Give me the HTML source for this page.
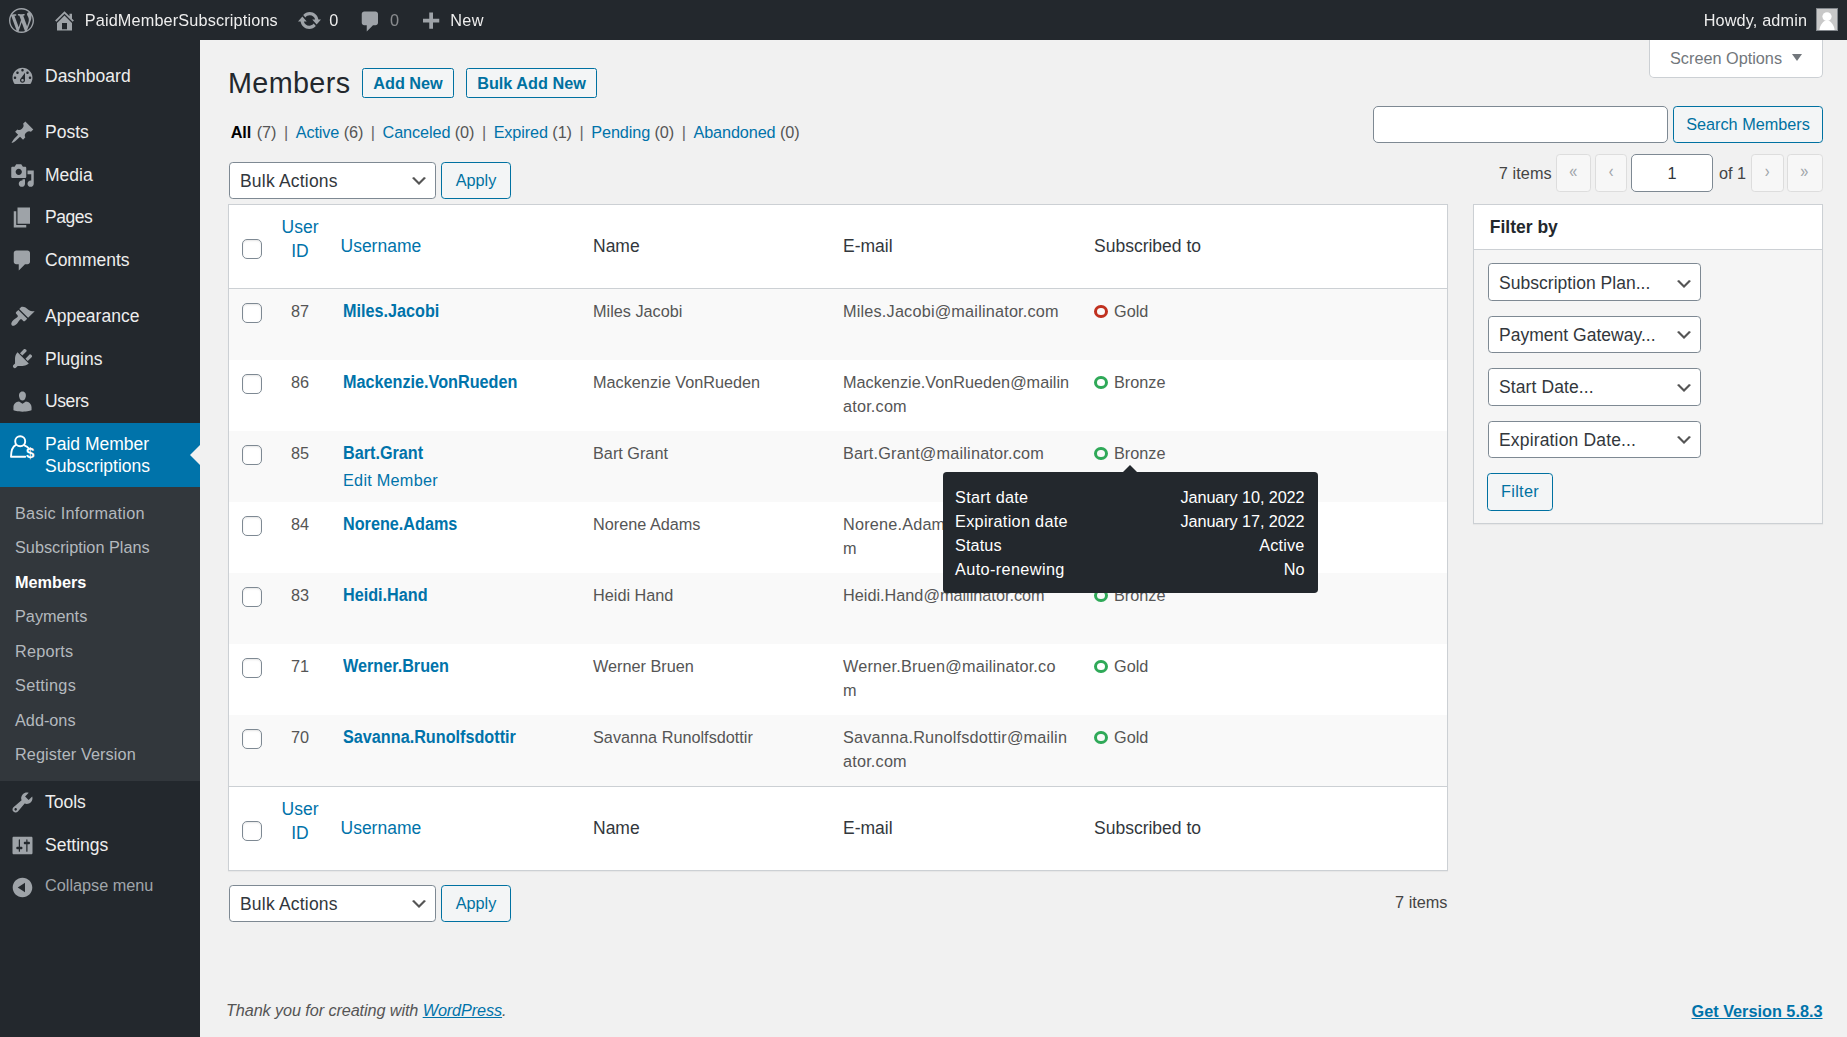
<!DOCTYPE html>
<html lang="en">
<head>
<meta charset="utf-8">
<title>Members ‹ PaidMemberSubscriptions — WordPress</title>
<style>
html,body{margin:0;padding:0}
body{width:1847px;height:1037px;overflow:hidden;position:relative;background:#f1f1f1;color:#444;font-family:"Liberation Sans",sans-serif;font-size:16.25px;line-height:1.4}
a{color:#0073aa;text-decoration:none}
svg{display:block}
.abs{position:absolute}
/* ---------- admin bar ---------- */
#wpadminbar{will-change:transform;position:absolute;left:0;top:0;width:1847px;height:40px;background:#23282d;color:#eee;font-size:16.25px;line-height:40px;z-index:10}
#wpadminbar .ic{position:absolute;width:25px;height:25px;fill:#9ea3a8}
#wpadminbar .t{position:absolute;top:0;white-space:nowrap;color:#eee}
/* ---------- side menu ---------- */
#adminmenuback{position:absolute;left:0;top:40px;width:200px;height:997px;background:#23282d}
#adminmenu{position:absolute;left:0;top:55px;width:200px;font-size:17.5px;line-height:22px;color:#eee}
#adminmenu .mi{position:relative;height:42.5px}
#adminmenu .mi svg{position:absolute;left:10px;top:8.75px;width:25px;height:25px;fill:#9ea3a8}
#adminmenu .mi .n{position:absolute;left:45px;top:10px;white-space:nowrap}
#adminmenu .sep{height:13.75px}
#adminmenu .cur{background:#0073aa;height:64px;color:#fff}
#adminmenu .cur svg{fill:#fff}
#adminmenu .cur:after{content:"";position:absolute;right:0;top:22px;border:10px solid transparent;border-right-color:#f1f1f1;width:0;height:0}
#adminmenu .sub{background:#32373c;padding:8.75px 0 10px;font-size:16.25px;line-height:22px;color:#b4b9be}
#adminmenu .sub div{height:34.5px;box-sizing:border-box;padding:6.25px 15px}
#adminmenu .sub .on{color:#fff;font-weight:bold}
#adminmenu .col{color:#a0a5aa;font-size:16.25px}
#adminmenu .col .n{top:8px}


/* ---------- content ---------- */
#wpbody{position:absolute;left:200px;top:40px;width:1647px;height:997px;color:#444}
.btn{position:absolute;box-sizing:border-box;border:1px solid #0071a1;border-radius:3.75px;background:#f3f5f6;color:#0071a1;font-size:16.25px;text-align:center;white-space:nowrap;height:36.5px;line-height:34.5px}
.pta{position:absolute;box-sizing:border-box;border:1px solid #0071a1;border-radius:2.5px;background:#f3f5f6;color:#0071a1;font-size:16.25px;font-weight:bold;text-align:center;white-space:nowrap;height:30px;line-height:28px}
.sel{position:absolute;box-sizing:border-box;border:1px solid #7e8993;border-radius:3.75px;background:#fff;color:#32373c;font-size:17.5px;height:37px;line-height:37.5px;padding-left:10px;white-space:nowrap}
.sel svg{position:absolute;right:6px;top:8.5px;width:20px;height:20px}
.inp{position:absolute;box-sizing:border-box;border:1px solid #7e8993;border-radius:5px;background:#fff;color:#32373c;height:36.5px}
.pg{position:absolute;box-sizing:border-box;border:1px solid #ddd;border-radius:3.75px;background:#f7f7f7;color:#a0a5aa;font-size:19px;line-height:32px;height:38px;text-align:center;top:114px}
.pg i{display:inline-block;font-style:normal;transform:scaleX(.76)}
#scr{position:absolute;left:1449px;top:0;width:173.5px;height:37.5px;box-sizing:border-box;border:1px solid #ccd0d4;border-top:none;border-radius:0 0 5px 5px;background:#fff;color:#72777c;font-size:16.25px;line-height:37px}
h1{position:absolute;margin:0;left:28px;top:25px;font-size:28.75px;font-weight:normal;color:#23282d;line-height:37px;white-space:nowrap;letter-spacing:.37px}
.subsubsub{position:absolute;left:27.5px;top:80px;margin:0;color:#666;font-size:16.25px;line-height:24px;white-space:nowrap;letter-spacing:-.115px}
.subsubsub a,.subsubsub b{padding:0 3.25px}
.subsubsub b{color:#000}
.subsubsub b i{font-weight:normal;margin-left:1.2px}
.subsubsub i{font-style:normal;color:#555}
/* table */
#tbl{position:absolute;left:28px;top:164px;width:1219.5px;height:666.5px;box-sizing:border-box;border:1px solid #ccd0d4;background:#fff;box-shadow:0 1px 1px rgba(0,0,0,.04)}
#tbl .hd{position:absolute;left:0;width:1217.5px;height:83px;font-size:17.5px;line-height:24px;color:#32373c}
#tbl .hd.top{top:0;border-bottom:1px solid #ccd0d4}
#tbl .hd.bot{top:581px;border-top:1px solid #ccd0d4}
#tbl .row{position:absolute;left:0;width:1217.5px;height:71px;font-size:16.25px;line-height:24px;color:#555}
#tbl .row.odd{background:#f9f9f9}
.cb{position:absolute;left:13px;box-sizing:border-box;width:20px;height:20px;border:1px solid #7e8993;border-radius:5px;background:#fff;box-shadow:inset 0 1px 2px rgba(0,0,0,.1)}
.c{position:absolute;white-space:nowrap}
.cid{left:39.5px;width:63px;text-align:center}
.cun{left:114px}
.cnm{left:364px}
.cem{left:614px}
.csb{left:865px}
.row .c{top:10px}
.row .cun{font-size:17.5px;font-weight:bold;color:#0073aa;transform:scaleX(.926);transform-origin:0 50%}
.ra{position:absolute;left:114px;top:36.5px;color:#0073aa;letter-spacing:.25px}
.dot{display:inline-block;box-sizing:border-box;width:14px;height:13.5px;border:3px solid #2fa958;border-radius:50%;vertical-align:-1px;margin-right:6px}
.dot.red{border-color:#c0311f}
.k{letter-spacing:.19px}
/* filter */
#flt{position:absolute;left:1273px;top:164px;width:350px;height:319.5px;box-sizing:border-box;border:1px solid #ccd0d4;background:#f5f5f5;box-shadow:0 1px 1px rgba(0,0,0,.04)}
#flt .h{height:43.5px;background:#fff;border-bottom:1px solid #ccd0d4;font-size:17.5px;font-weight:bold;color:#23282d;line-height:44.5px;padding-left:15.75px}
/* tooltip */
#tip{position:absolute;left:743px;top:432px;width:375px;height:121px;box-sizing:border-box;background:#23282d;color:#fff;border-radius:3.75px;font-size:16.25px;line-height:24px;padding:13px 13.5px 0 12px;z-index:5}
#tip:before{content:"";position:absolute;left:180px;top:-7.5px;border:7.5px solid transparent;border-top:0;border-bottom-color:#23282d}
#tip div{display:flex;justify-content:space-between}
#foot{position:absolute;left:26px;top:958px;font-size:16.25px;font-style:italic;color:#555;line-height:24px;white-space:nowrap;letter-spacing:-.106px}
#foot a{text-decoration:underline}
#ver{position:absolute;right:24.5px;top:959px;font-size:16.25px;font-weight:bold;line-height:24px;white-space:nowrap;text-decoration:underline}
</style>
</head>
<body>
<div id="wpadminbar">
<svg class="ic" style="left:8.75px;top:7.75px" viewBox="0 0 20 20"><path d="M20 10c0-5.51-4.49-10-10-10C4.48 0 0 4.49 0 10c0 5.52 4.48 10 10 10 5.51 0 10-4.48 10-10zM7.78 15.37L4.37 6.22c.55-.02 1.17-.08 1.17-.08.5-.06.44-1.13-.06-1.11 0 0-1.45.11-2.37.11-.18 0-.37 0-.58-.01C4.12 2.69 6.87 1.11 10 1.11c2.33 0 4.45.87 6.05 2.34-.68-.11-1.65.39-1.65 1.58 0 .74.45 1.36.9 2.1.35.61.55 1.36.55 2.46 0 1.49-1.4 5-1.4 5l-3.03-8.37c.54-.02.82-.17.82-.17.5-.05.44-1.25-.06-1.22 0 0-1.44.12-2.38.12-.87 0-2.33-.12-2.33-.12-.5-.03-.56 1.2-.06 1.22l.92.08 1.26 3.41zM17.41 10c.24-.64.74-1.87.43-4.25.7 1.29 1.05 2.71 1.05 4.25 0 3.29-1.73 6.24-4.4 7.78.97-2.59 1.94-5.2 2.92-7.78zM6.1 18.09C3.12 16.65 1.11 13.53 1.11 10c0-1.3.23-2.48.72-3.59C3.25 10.3 4.67 14.2 6.1 18.09zm4.03-6.63l2.58 6.98c-.86.29-1.76.45-2.71.45-.79 0-1.57-.11-2.29-.33.81-2.38 1.62-4.74 2.42-7.1z"/></svg>
<svg class="ic" style="left:52px;top:7.75px" viewBox="0 0 20 20"><path d="M16 8.5l1.53 1.53-1.06 1.06L10 4.62l-6.47 6.47-1.06-1.06L10 2.5l4 4v-2h2v4zm-6-2.46l6 5.99V18H4v-5.97zM12 17v-5H8v5h4z"/></svg>
<span class="t" style="left:84.75px;letter-spacing:.15px">PaidMemberSubscriptions</span>
<svg class="ic" style="left:296.5px;top:7.5px" viewBox="0 0 20 20"><path d="M10.2 3.28c3.53 0 6.43 2.61 6.92 6h2.08l-3.5 4-3.5-4h2.32c-.45-1.97-2.21-3.45-4.32-3.45-1.45 0-2.73.71-3.54 1.78L4.95 5.66C6.23 4.2 8.11 3.28 10.2 3.28zm-.4 13.44c-3.52 0-6.43-2.61-6.92-6H.8l3.5-4c1.17 1.33 2.33 2.67 3.5 4H5.48c.45 1.97 2.21 3.45 4.32 3.45 1.45 0 2.73-.71 3.54-1.78l1.71 1.95c-1.28 1.46-3.15 2.38-5.25 2.38z"/></svg>
<span class="t" style="left:329.2px">0</span>
<svg class="ic" style="left:357.6px;top:9px" viewBox="0 0 20 20"><path d="M5 2h9c1.1 0 2 .9 2 2v7c0 1.1-.9 2-2 2h-2l-5 5v-5H5c-1.1 0-2-.9-2-2V4c0-1.1.9-2 2-2z"/></svg>
<span class="t" style="left:390px;opacity:.5">0</span>
<svg class="ic" style="left:417.6px;top:9.6px" viewBox="0 0 20 20"><path d="M17 7v3h-5v5H9v-5H4V7h5V2h3v5h5z"/></svg>
<span class="t" style="left:450.2px;letter-spacing:.4px">New</span>
<span class="t" style="right:39.8px;letter-spacing:.15px">Howdy, admin</span>
<div class="abs" style="left:1816px;top:8px;width:20px;height:21px;border:1px solid #82878c;background:#c8c8c8;overflow:hidden"><svg viewBox="0 0 20 21" width="20" height="21"><ellipse cx="10" cy="7.6" rx="4.6" ry="4.4" fill="#fff"/><path d="M2.4 21C2.9 16.2 5.6 13.4 7.6 12H12.4C14.4 13.4 17.1 16.2 17.6 21z" fill="#fff"/></svg></div>
</div>

<div id="adminmenuback"></div>
<div id="adminmenu">
<div class="mi"><svg viewBox="0 0 20 20"><path d="M3.76 16h12.48c1.1-1.37 1.76-3.11 1.76-5 0-4.42-3.58-8-8-8s-8 3.58-8 8c0 1.890.66 3.63 1.76 5zM10 4c.55 0 1 .45 1 1s-.45 1-1 1-1-.45-1-1 .45-1 1-1zM6 6c.55 0 1 .45 1 1s-.45 1-1 1-1-.45-1-1 .45-1 1-1zm8 0c.55 0 1 .45 1 1s-.45 1-1 1-1-.45-1-1 .45-1 1-1zm-5.370 5.550L12 7v6c0 1.100-.9 2-2 2s-2-.9-2-2c0-.57.24-1.080.63-1.450zM4 10c.55 0 1 .45 1 1s-.45 1-1 1-1-.45-1-1 .45-1 1-1zm12 0c.55 0 1 .45 1 1s-.45 1-1 1-1-.45-1-1 .45-1 1-1zm-5 3c0-.55-.45-1-1-1s-1 .45-1 1 .45 1 1 1 1-.45 1-1z"/></svg><span class="n">Dashboard</span></div>
<div class="sep"></div>
<div class="mi"><svg viewBox="0 0 20 20"><path d="M10.44 3.02l1.82-1.82 6.36 6.35-1.83 1.82c-1.05-.68-2.48-.57-3.41.36l-.75.75c-.92.93-1.04 2.35-.35 3.41l-1.83 1.82-2.41-2.41-2.8 2.79c-.42.42-3.38 2.71-3.8 2.29s1.86-3.39 2.28-3.81l2.79-2.79L4.1 9.36l1.83-1.82c1.05.69 2.48.57 3.4-.36l.75-.75c.93-.92 1.05-2.35.36-3.41z"/></svg><span class="n">Posts</span></div>
<div class="mi"><svg viewBox="0 0 20 20"><path d="M13 11V4c0-.55-.45-1-1-1h-1.670L9 1H5L3.670 3H2c-.55 0-1 .45-1 1v7c0 .55.45 1 1 1h10c.55 0 1-.45 1-1zM7 4.500c1.380 0 2.500 1.120 2.500 2.500S8.380 9.500 7 9.500 4.500 8.380 4.500 7 5.620 4.500 7 4.500zM14 6h5v10.500c0 1.380-1.120 2.500-2.500 2.500S14 17.880 14 16.500s1.120-2.500 2.500-2.500c.17 0 .34.020.5.050V9h-3V6zm-4 8.050V13h2v3.500c0 1.380-1.120 2.500-2.500 2.500S7 17.880 7 16.500 8.120 14 9.500 14c.17 0 .34.020.5.050z"/></svg><span class="n">Media</span></div>
<div class="mi"><svg viewBox="0 0 20 20"><path d="M6 15V2h10v13H6zm-1 1h8v2H3V5h2v11z"/></svg><span class="n" style="letter-spacing:-.45px">Pages</span></div>
<div class="mi"><svg viewBox="0 0 20 20"><path d="M5 2h9c1.1 0 2 .9 2 2v7c0 1.1-.9 2-2 2h-2l-5 5v-5H5c-1.1 0-2-.9-2-2V4c0-1.1.9-2 2-2z"/></svg><span class="n">Comments</span></div>
<div class="sep"></div>
<div class="mi"><svg viewBox="0 0 20 20"><path d="M14.48 11.06L7.41 3.99l1.5-1.5c.5-.56 2.3-.47 3.51.32 1.21.8 1.43 1.28 2.91 2.1 1.18.64 2.45 1.26 4.45.85zm-.71.71L6.7 4.7 4.93 6.47c-.39.39-.39 1.02 0 1.41l1.06 1.06c.39.39.39 1.03 0 1.42-.6.6-1.43 1.11-2.21 1.69-.35.26-.7.53-1.01.84C1.43 14.23.4 16.08 1.4 17.07c.99 1 2.84-.03 4.18-1.36.31-.31.58-.66.85-1.02.57-.78 1.08-1.61 1.69-2.21.39-.39 1.02-.39 1.41 0l1.06 1.06c.39.39 1.02.39 1.41 0z"/></svg><span class="n">Appearance</span></div>
<div class="mi"><svg viewBox="0 0 20 20"><path d="M13.11 4.36L9.87 7.6 8 5.73l3.24-3.24c.35-.34 1.05-.2 1.56.32.52.51.66 1.21.31 1.55zm-8 1.77l.91-1.12 9.01 9.01-1.19.84c-.71.71-2.63 1.16-3.82 1.16H6.14L4.9 17.26c-.59.59-1.54.59-2.12 0-.59-.58-.59-1.53 0-2.12l1.24-1.24v-3.88c0-1.13.4-3.19 1.09-3.89zm7.26 3.97l3.24-3.24c.34-.35 1.04-.21 1.55.31.52.51.66 1.21.31 1.55l-3.24 3.25z"/></svg><span class="n">Plugins</span></div>
<div class="mi"><svg viewBox="0 0 20 20"><path d="M10 9.25c-2.27 0-2.73-3.44-2.73-3.44C7 4.02 7.82 2 9.97 2c2.16 0 2.98 2.02 2.71 3.81 0 0-.41 3.44-2.68 3.44zm0 2.57L12.72 10c2.39 0 4.52 2.33 4.52 4.53v2.49s-3.65 1.13-7.24 1.13c-3.65 0-7.24-1.13-7.24-1.13v-2.49c0-2.25 1.94-4.48 4.47-4.48z"/></svg><span class="n" style="letter-spacing:-.4px">Users</span></div>
<div class="mi cur"><svg viewBox="0 0 30 30" style="left:8px;top:10px;width:30px;height:30px;overflow:visible;fill:none;stroke:#fff;stroke-width:1.9;stroke-linecap:round;stroke-linejoin:round"><circle cx="12.2" cy="8.2" r="5"/><path d="M7.9 11.9C4.5 13.6 3.1 17.6 3 23.8H17.2M16.3 12.4C18.3 13 20 14.2 21.1 15.7"/><text x="17.9" y="24.7" font-family="Liberation Sans,sans-serif" font-size="15" font-weight="bold" fill="#fff" stroke="none">$</text></svg><span class="n">Paid Member<br>Subscriptions</span></div>
<div class="sub"><div style="letter-spacing:.25px">Basic Information</div><div>Subscription Plans</div><div class="on">Members</div><div>Payments</div><div style="letter-spacing:.2px">Reports</div><div style="letter-spacing:.3px">Settings</div><div>Add-ons</div><div style="letter-spacing:.1px">Register Version</div></div>
<div class="mi"><svg viewBox="0 0 20 20"><path d="M16.68 9.77c-1.34 1.34-3.3 1.67-4.95.99l-5.41 6.52c-.99.99-2.59.99-3.58 0s-.99-2.59 0-3.57l6.52-5.42c-.68-1.65-.35-3.61.99-4.95 1.28-1.28 3.12-1.62 4.72-1.06l-2.89 2.89 2.82 2.82 2.86-2.87c.53 1.58.18 3.39-1.08 4.65zM3.81 16.21c.4.39 1.04.39 1.43 0 .4-.4.4-1.04 0-1.43-.39-.4-1.03-.4-1.43 0-.39.39-.39 1.03 0 1.43z"/></svg><span class="n">Tools</span></div>
<div class="mi"><svg viewBox="0 0 20 20"><path d="M18 16V4c0-.55-.45-1-1-1H3c-.55 0-1 .45-1 1v12c0 .55.45 1 1 1h14c.55 0 1-.45 1-1zM8 11h1c.55 0 1 .45 1 1s-.45 1-1 1H8v1.5c0 .28-.22.5-.5.5s-.5-.22-.5-.5V13H6c-.55 0-1-.45-1-1s.45-1 1-1h1V5.5c0-.28.22-.5.5-.5s.5.22.5.5V11zm5-2h-1c-.55 0-1-.45-1-1s.45-1 1-1h1V5.500c0-.28.22-.5.5-.5s.5.22.5.5V7h1c.55 0 1 .45 1 1s-.45 1-1 1h-1v5.500c0 .28-.22.5-.5.5s-.5-.22-.5-.5V9z"/></svg><span class="n">Settings</span></div>
<div class="mi col"><svg viewBox="0 0 20 20"><path d="M10 2.16c4.33 0 7.84 3.51 7.84 7.84s-3.51 7.84-7.84 7.84S2.16 14.33 2.16 10 5.67 2.16 10 2.16zm2 11.72V6.12L6.18 9.97z"/></svg><span class="n">Collapse menu</span></div>
</div>

<div id="wpbody">
<div id="scr"><span style="position:absolute;left:20px">Screen Options</span><svg class="abs" style="left:141.5px;top:14px;width:10px;height:7px" viewBox="0 0 10 7"><path d="M0 0h10L5 7z" fill="#72777c"/></svg></div>
<h1>Members</h1>
<a class="pta" style="left:162px;top:28px;width:92px">Add New</a>
<a class="pta" style="left:266px;top:28px;width:131px">Bulk Add New</a>
<div class="subsubsub"><b>All <i>(7)</i></b> | <a>Active <i>(6)</i></a> | <a>Canceled <i>(0)</i></a> | <a>Expired <i>(1)</i></a> | <a>Pending <i>(0)</i></a> | <a>Abandoned <i>(0)</i></a></div>
<div class="inp" style="left:1173px;top:66px;width:295px"></div>
<a class="btn" style="left:1473px;top:66px;width:150px">Search Members</a>
<div class="sel" style="left:29px;top:122px;width:206.5px;height:37px"><span style="letter-spacing:.2px">Bulk Actions</span><svg style="top:7.5px" viewBox="0 0 20 20"><path d="M5 6l5 5 5-5 2 1-7 7-7-7 2-1z" fill="#555"/></svg></div>
<a class="btn" style="left:241px;top:122px;width:70px">Apply</a>
<span class="c" style="left:1298.75px;top:121px;line-height:24px;letter-spacing:.1px">7 items</span>
<span class="pg" style="left:1356px;width:35px"><i>«</i></span>
<span class="pg" style="left:1395px;width:31.5px"><i>‹</i></span>
<div class="inp" style="left:1431px;top:114px;width:82px;height:38px;text-align:center;line-height:36px">1</div>
<span class="c" style="left:1519px;top:121px;line-height:24px">of 1</span>
<span class="pg" style="left:1551px;width:32.5px"><i>›</i></span>
<span class="pg" style="left:1587px;width:35.5px"><i>»</i></span>
<div id="tbl">
<div class="hd top"><span class="cb" style="top:33.5px"></span>
<a class="c cid" style="top:10px">User<br>ID</a><a class="c cun" style="top:29px;left:111.5px">Username</a><span class="c cnm" style="top:29px">Name</span><span class="c cem" style="top:29px">E-mail</span><span class="c csb" style="top:29px">Subscribed to</span></div>
<div class="row odd" style="top:84px"><span class="cb" style="top:14px"></span><span class="c cid">87</span><a class="c cun">Miles.Jacobi</a><span class="c cnm">Miles Jacobi</span><span class="c cem"><span class="k">Miles.Jacobi@mailinator.com</span></span><span class="c csb"><i class="dot red"></i>Gold</span></div>
<div class="row" style="top:155px"><span class="cb" style="top:14px"></span><span class="c cid">86</span><a class="c cun">Mackenzie.VonRueden</a><span class="c cnm">Mackenzie VonRueden</span><span class="c cem">Mackenzie.VonRueden@mailin<br><span class="k">ator.com</span></span><span class="c csb"><i class="dot "></i>Bronze</span></div>
<div class="row odd" style="top:226px"><span class="cb" style="top:14px"></span><span class="c cid">85</span><a class="c cun">Bart.Grant</a><a class="ra">Edit Member</a><span class="c cnm">Bart Grant</span><span class="c cem"><span class="k">Bart.Grant@mailinator.com</span></span><span class="c csb"><i class="dot "></i>Bronze</span></div>
<div class="row" style="top:297px"><span class="cb" style="top:14px"></span><span class="c cid">84</span><a class="c cun">Norene.Adams</a><span class="c cnm">Norene Adams</span><span class="c cem"><span class="k">Norene.Adams@mailinator.co</span><br>m</span><span class="c csb"><i class="dot "></i>Bronze</span></div>
<div class="row odd" style="top:368px"><span class="cb" style="top:14px"></span><span class="c cid">83</span><a class="c cun">Heidi.Hand</a><span class="c cnm">Heidi Hand</span><span class="c cem">Heidi.Hand@mailinator.com</span><span class="c csb"><i class="dot "></i>Bronze</span></div>
<div class="row" style="top:439px"><span class="cb" style="top:14px"></span><span class="c cid">71</span><a class="c cun">Werner.Bruen</a><span class="c cnm">Werner Bruen</span><span class="c cem"><span class="k">Werner.Bruen@mailinator.co</span><br>m</span><span class="c csb"><i class="dot "></i>Gold</span></div>
<div class="row odd" style="top:510px"><span class="cb" style="top:14px"></span><span class="c cid">70</span><a class="c cun">Savanna.Runolfsdottir</a><span class="c cnm">Savanna Runolfsdottir</span><span class="c cem"><span class="k">Savanna.Runolfsdottir@mailin<br>ator.com</span></span><span class="c csb"><i class="dot "></i>Gold</span></div>
<div class="hd bot"><span class="cb" style="top:33.5px"></span>
<a class="c cid" style="top:10px">User<br>ID</a><a class="c cun" style="top:29px;left:111.5px">Username</a><span class="c cnm" style="top:29px">Name</span><span class="c cem" style="top:29px">E-mail</span><span class="c csb" style="top:29px">Subscribed to</span></div>
</div>
<div id="flt"><div class="h">Filter by</div>
<div class="sel" style="left:14px;top:58px;width:212.5px;height:38px"><span style="letter-spacing:.03px;position:relative;top:.5px">Subscription Plan...</span><svg style="top:9.5px" viewBox="0 0 20 20"><path d="M5 6l5 5 5-5 2 1-7 7-7-7 2-1z" fill="#555"/></svg></div>
<div class="sel" style="left:14px;top:110.5px;width:212.5px;height:37px"><span style="letter-spacing:.02px">Payment Gateway...</span><svg viewBox="0 0 20 20"><path d="M5 6l5 5 5-5 2 1-7 7-7-7 2-1z" fill="#555"/></svg></div>
<div class="sel" style="left:14px;top:163px;width:212.5px;height:38px"><span style="letter-spacing:.1px">Start Date...</span><svg style="top:9.25px" viewBox="0 0 20 20"><path d="M5 6l5 5 5-5 2 1-7 7-7-7 2-1z" fill="#555"/></svg></div>
<div class="sel" style="left:14px;top:215.5px;width:212.5px;height:37px"><span style="letter-spacing:.16px">Expiration Date...</span><svg viewBox="0 0 20 20"><path d="M5 6l5 5 5-5 2 1-7 7-7-7 2-1z" fill="#555"/></svg></div>
<a class="btn" style="left:13px;top:268px;width:66px;height:38px;line-height:34px;letter-spacing:.3px">Filter</a>
</div>
<div id="tip"><div><span style="letter-spacing:.3px">Start date</span><span style="letter-spacing:-.1px">January 10, 2022</span></div><div><span style="letter-spacing:.3px">Expiration date</span><span style="letter-spacing:-.1px">January 17, 2022</span></div><div><span style="letter-spacing:.1px">Status</span><span style="letter-spacing:.17px">Active</span></div><div><span style="letter-spacing:.38px">Auto-renewing</span><span>No</span></div></div>
<div class="sel" style="left:29px;top:845px;width:206.5px;height:37px"><span style="letter-spacing:.2px">Bulk Actions</span><svg style="top:7.5px" viewBox="0 0 20 20"><path d="M5 6l5 5 5-5 2 1-7 7-7-7 2-1z" fill="#555"/></svg></div>
<a class="btn" style="left:241px;top:845px;width:70px">Apply</a>
<span class="c" style="right:399.5px;top:850px;line-height:24px">7 items</span>
<div id="foot">Thank you for creating with <a>WordPress</a>.</div>
<a id="ver">Get Version 5.8.3</a>
</div>
</body>
</html>
